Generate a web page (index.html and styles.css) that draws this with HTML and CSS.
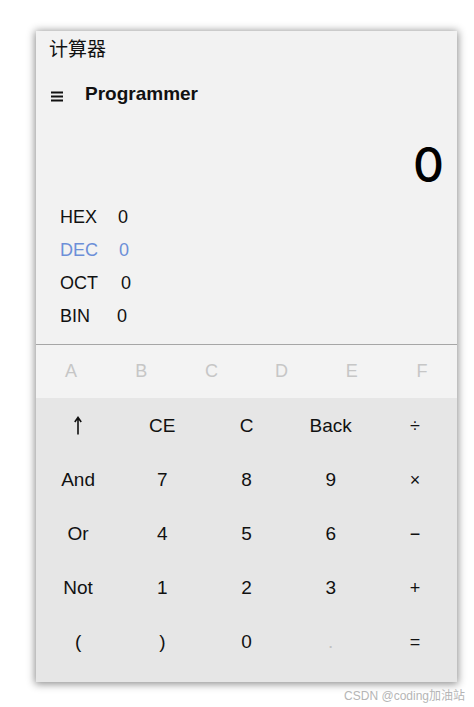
FILE: index.html
```html
<!DOCTYPE html>
<html lang="zh">
<head>
<meta charset="utf-8">
<title>计算器</title>
<link rel="stylesheet" href="styles.css">
</head>
<body>
<div class="window">
  <div class="title">计算器</div>
  <div class="header">
    <svg class="menu" width="12" height="11" viewBox="0 0 12 11"><rect x="0" y="0.5" width="12" height="2" fill="#111"/><rect x="0" y="4.5" width="12" height="2" fill="#111"/><rect x="0" y="8.5" width="12" height="2" fill="#111"/></svg>
    <span class="mode-name">Programmer</span>
  </div>
  <div class="display">0</div>
  <div class="bases">
    <div class="base"><span class="lbl">HEX</span><span class="val">0</span></div>
    <div class="base active"><span class="lbl">DEC</span><span class="val">0</span></div>
    <div class="base"><span class="lbl oct">OCT</span><span class="val">0</span></div>
    <div class="base"><span class="lbl bin">BIN</span><span class="val">0</span></div>
  </div>
  <div class="letters">
    <div class="letter">A</div><div class="letter">B</div><div class="letter">C</div>
    <div class="letter">D</div><div class="letter">E</div><div class="letter">F</div>
  </div>
  <div class="keypad">
    <div class="key" aria-label="↑"><svg class="arrow" width="8" height="19" viewBox="0 0 8 19"><path d="M4 1.5V18.5M0.8 6L4 1.5L7.2 6" fill="none" stroke="#111" stroke-width="1.6" stroke-linejoin="miter"/></svg></div><div class="key">CE</div><div class="key">C</div><div class="key">Back</div><div class="key op">÷</div>
    <div class="key">And</div><div class="key">7</div><div class="key">8</div><div class="key">9</div><div class="key op">×</div>
    <div class="key">Or</div><div class="key">4</div><div class="key">5</div><div class="key">6</div><div class="key op">−</div>
    <div class="key">Not</div><div class="key">1</div><div class="key">2</div><div class="key">3</div><div class="key op">+</div>
    <div class="key">(</div><div class="key">)</div><div class="key">0</div><div class="key disabled">.</div><div class="key op">=</div>
  </div>
</div>
<div class="watermark">CSDN @coding加油站</div>
</body>
</html>
```

FILE: styles.css
```css
html, body {
  margin: 0;
  padding: 0;
  background: #ffffff;
}
body {
  width: 474px;
  height: 707px;
  overflow: hidden;
  font-family: "Liberation Sans", "Noto Sans CJK SC", Arial, sans-serif;
  color: #111;
}
.window {
  margin: 31px 0 0 36px;
  width: 421px;
  height: 651px;
  background: #f2f2f2;
  box-shadow: 0 1px 8px 1px rgba(0, 0, 0, 0.45);
  display: flex;
  flex-direction: column;
}
.title {
  height: 34px;
  line-height: 34px;
  padding-left: 13px;
  font-family: "Noto Sans CJK SC", sans-serif;
  font-size: 19px;
  color: #111;
}
.header {
  height: 56px;
  display: flex;
  align-items: center;
  padding-left: 15px;
  padding-top: 1px;
}
.menu {
  margin-top: 4px;
  margin-right: 22px;
  flex: none;
}
.mode-name {
  font-size: 19px;
  font-weight: bold;
  color: #111;
}
.display {
  padding-top: 13px;
  height: 60px;
  line-height: 60px;
  text-align: right;
  padding-right: 13px;
  font-family: "Inter", "DejaVu Sans", sans-serif;
  font-weight: 500;
  font-size: 48px;
  color: #000;
}
.bases {
  margin-top: 5px;
  padding-left: 24px;
  padding-bottom: 12px;
  border-bottom: 1px solid #a6a6a6;
}
.base {
  height: 33px;
  line-height: 35px;
  font-size: 18px;
  display: flex;
}
.base .lbl {
  margin-right: 21px;
}
.base .lbl.oct {
  margin-right: 23px;
}
.base .lbl.bin {
  margin-right: 27px;
}
.base.active {
  color: #6c8fd8;
}
.letters {
  display: grid;
  grid-template-columns: repeat(6, 1fr);
  height: 53px;
  background: #f3f3f3;
}
.letter {
  display: flex;
  align-items: center;
  justify-content: center;
  font-size: 18px;
  color: #c6c6c6;
}
.keypad {
  flex: 1;
  background: #e6e6e6;
  display: grid;
  grid-template-columns: repeat(5, 1fr);
  grid-auto-rows: 54px;
  padding-top: 1px;
}
.key {
  display: flex;
  align-items: center;
  justify-content: center;
  font-size: 19px;
  color: #111;
}
.arrow {
  display: block;
  margin-top: -2px;
}
.key.op {
  font-size: 18px;
}
.key.disabled {
  color: #c2c2c2;
}
.watermark {
  margin-top: 6px;
  text-align: right;
  padding-right: 9px;
  font-size: 12px;
  line-height: 16px;
  color: #b5b5b5;
}
```
